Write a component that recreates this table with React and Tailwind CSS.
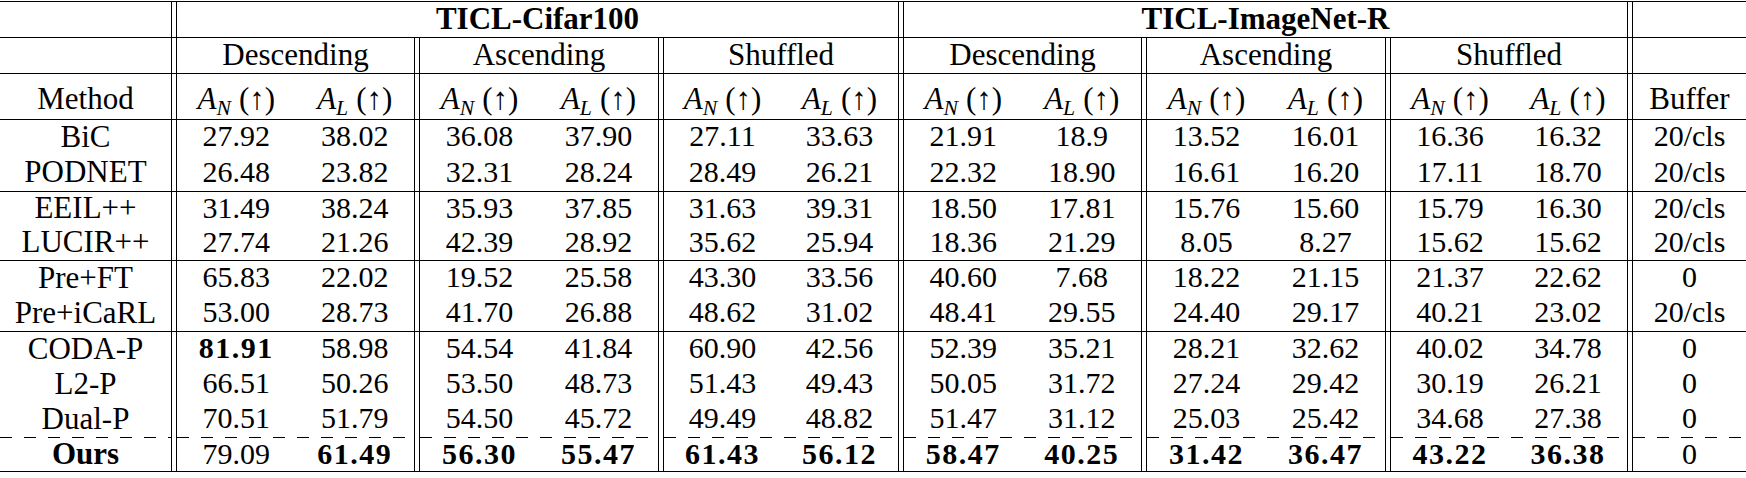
import React from 'react'

// column tracks: method | rule | 6 groups of 2 sub-columns separated by double rules | buffer
const COLS = 'grid grid-cols-[171px_6px_237px_6px_238px_6px_234px_6px_237px_6px_238px_6px_236px_6px_113px]'

const rows = [
  { name: 'BiC', h: 'h-[35px]', v: ['27.92', '38.02', '36.08', '37.90', '27.11', '33.63', '21.91', '18.9', '13.52', '16.01', '16.36', '16.32'], buf: '20/cls' },
  { name: 'PODNET', h: 'h-[36px]', v: ['26.48', '23.82', '32.31', '28.24', '28.49', '26.21', '22.32', '18.90', '16.61', '16.20', '17.11', '18.70'], buf: '20/cls', line: 'solid' },
  { name: 'EEIL++', h: 'h-[34px]', v: ['31.49', '38.24', '35.93', '37.85', '31.63', '39.31', '18.50', '17.81', '15.76', '15.60', '15.79', '16.30'], buf: '20/cls' },
  { name: 'LUCIR++', h: 'h-[34px]', v: ['27.74', '21.26', '42.39', '28.92', '35.62', '25.94', '18.36', '21.29', '8.05', '8.27', '15.62', '15.62'], buf: '20/cls', line: 'solid' },
  { name: 'Pre+FT', h: 'h-[35px]', v: ['65.83', '22.02', '19.52', '25.58', '43.30', '33.56', '40.60', '7.68', '18.22', '21.15', '21.37', '22.62'], buf: '0' },
  { name: 'Pre+iCaRL', h: 'h-[35px]', v: ['53.00', '28.73', '41.70', '26.88', '48.62', '31.02', '48.41', '29.55', '24.40', '29.17', '40.21', '23.02'], buf: '20/cls', line: 'solid' },
  { name: 'CODA-P', h: 'h-[35px]', v: ['81.91', '58.98', '54.54', '41.84', '60.90', '42.56', '52.39', '35.21', '28.21', '32.62', '40.02', '34.78'], buf: '0', bold: [0] },
  { name: 'L2-P', h: 'h-[35px]', v: ['66.51', '50.26', '53.50', '48.73', '51.43', '49.43', '50.05', '31.72', '27.24', '29.42', '30.19', '26.21'], buf: '0' },
  { name: 'Dual-P', h: 'h-[35px]', v: ['70.51', '51.79', '54.50', '45.72', '49.49', '48.82', '51.47', '31.12', '25.03', '25.42', '34.68', '27.38'], buf: '0', line: 'dashed' },
  { name: 'Ours', h: 'h-[33px]', v: ['79.09', '61.49', '56.30', '55.47', '61.43', '56.12', '58.47', '40.25', '31.42', '36.47', '43.22', '36.38'], buf: '0', boldName: true, bold: [1, 2, 3, 4, 5, 6, 7, 8, 9, 10, 11], line: 'solid' },
]

const Rule = () => <div className="border-x border-black" />

const HLine = () => <div className="h-px bg-black" />

function DashLine() {
  const dash = 'bg-[repeating-linear-gradient(90deg,#000_0_12px,transparent_12px_24px)]'
  return (
    <div className={`${COLS} h-px`}>
      {Array.from({ length: 15 }).map((_, i) =>
        i % 2 === 1 ? <Rule key={i} /> : <div key={i} className={dash} />
      )}
    </div>
  )
}

function Cell({ children, bold, num }) {
  return (
    <div className={`flex items-center justify-center pb-[3px] whitespace-nowrap ${num ? 'text-[30px]' : ''} ${bold ? 'font-bold tracking-[1.5px]' : ''}`}>
      {children}
    </div>
  )
}

function Metric({ sub }) {
  return (
    <span>
      <span className="italic">A</span>
      <span className="italic text-[0.7em] relative top-[0.28em]">{sub}</span>
      <span className="ml-[8px]">(↑)</span>
    </span>
  )
}

export default function App() {
  const groups = ['Descending', 'Ascending', 'Shuffled', 'Descending', 'Ascending', 'Shuffled']

  return (
    <div className="w-[1746px] h-[478px] bg-white text-black [font-family:Liberation_Serif,serif] text-[31px] leading-none pt-px overflow-hidden">
      <HLine />

      {/* dataset titles */}
      <div className={`${COLS} h-[35px]`}>
        <div />
        <Rule />
        <div className="col-span-5 flex items-center justify-center font-bold pb-[2px]">TICL-Cifar100</div>
        <Rule />
        <div className="col-span-5 flex items-center justify-center font-bold pb-[2px]">TICL-ImageNet-R</div>
        <Rule />
        <div />
      </div>
      <HLine />

      {/* order groups */}
      <div className={`${COLS} h-[35px]`}>
        <div />
        {groups.map((g, i) => (
          <React.Fragment key={i}>
            <Rule />
            <Cell>{g}</Cell>
          </React.Fragment>
        ))}
        <Rule />
        <div />
      </div>
      <HLine />

      {/* metric header */}
      <div className={`${COLS} h-[45px]`}>
        <div className="flex items-center justify-center pt-[3px]">Method</div>
        {groups.map((_, i) => (
          <React.Fragment key={i}>
            <Rule />
            <div className="grid grid-cols-2 pt-[3px]">
              <div className="flex items-center justify-center"><Metric sub="N" /></div>
              <div className="flex items-center justify-center"><Metric sub="L" /></div>
            </div>
          </React.Fragment>
        ))}
        <Rule />
        <div className="flex items-center justify-center pt-[3px]">Buffer</div>
      </div>
      <HLine />

      {rows.map((r) => (
        <React.Fragment key={r.name}>
          <div className={`${COLS} ${r.h}`}>
            <Cell bold={false}>
              <span className={r.boldName ? 'font-bold' : ''}>{r.name}</span>
            </Cell>
            {[0, 1, 2, 3, 4, 5].map((g) => (
              <React.Fragment key={g}>
                <Rule />
                <div className="grid grid-cols-2">
                  {[0, 1].map((k) => {
                    const idx = g * 2 + k
                    return (
                      <Cell key={k} num bold={r.bold && r.bold.includes(idx)}>
                        {r.v[idx]}
                      </Cell>
                    )
                  })}
                </div>
              </React.Fragment>
            ))}
            <Rule />
            <Cell num>{r.buf}</Cell>
          </div>
          {r.line === 'solid' && <HLine />}
          {r.line === 'dashed' && <DashLine />}
        </React.Fragment>
      ))}
    </div>
  )
}
